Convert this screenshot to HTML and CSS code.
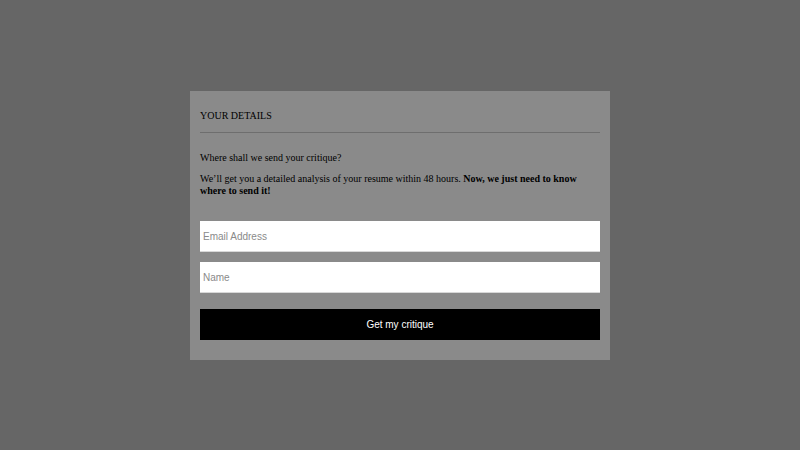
FILE: index.html
```html
<!DOCTYPE html>
<html lang="en">
<head>
    <meta charset="UTF-8">
    <meta name="viewport" content="width=device-width, initial-scale=1.0">
    <title>Your Details</title>
    <link rel="stylesheet" href="styles.css">
</head>
<body>
    <div class="overlay">
        <div class="modal">
            <h3 class="modal-title">YOUR DETAILS</h3>
            <p class="question">Where shall we send your critique?</p>
            <p class="intro">We’ll get you a detailed analysis of your resume within 48 hours. <strong>Now, we just need to know where to send it!</strong></p>

            <form class="details-form">
                <input type="email" placeholder="Email Address">
                <input type="text" placeholder="Name">
                <button type="submit">Get my critique</button>
            </form>
        </div>
    </div>
</body>
</html>
```

FILE: styles.css
```css
body {
    margin: 0;
    background-color: #666666;
    font-family: "Liberation Serif", serif;
    font-size: 10px;
    color: #000;
}

.overlay {
    display: flex;
    justify-content: center;
    align-items: flex-start;
    height: 450px;
    padding-top: 91px;
    box-sizing: border-box;
}

.modal {
    width: 420px;
    box-sizing: border-box;
    padding: 10px 10px 20px;
    background-color: #8a8a8a;
}

.modal-title {
    margin: 0;
    padding: 9px 0 10px;
    font-size: 10px;
    line-height: 12px;
    font-weight: normal;
    border-bottom: 1px solid #6e6e6e;
}

.question {
    margin: 19px 0 0;
    line-height: 12px;
}

.intro {
    margin: 9px 0 0;
    line-height: 11.5px;
}

.details-form {
    display: flex;
    flex-direction: column;
    margin-top: 25px;
}

.details-form input {
    height: 31px;
    margin-bottom: 10px;
    padding: 0 3px;
    border: none;
    border-bottom: 1px solid #d8d8d8;
    box-sizing: border-box;
    background-color: #fff;
    font-family: "Liberation Sans", sans-serif;
    font-size: 10px;
}

.details-form input::placeholder {
    color: #8a8a8a;
}

.details-form button {
    height: 31px;
    margin-top: 6px;
    border: none;
    background-color: #000;
    color: #fff;
    font-family: "Liberation Sans", sans-serif;
    font-size: 10px;
    cursor: pointer;
}
```
